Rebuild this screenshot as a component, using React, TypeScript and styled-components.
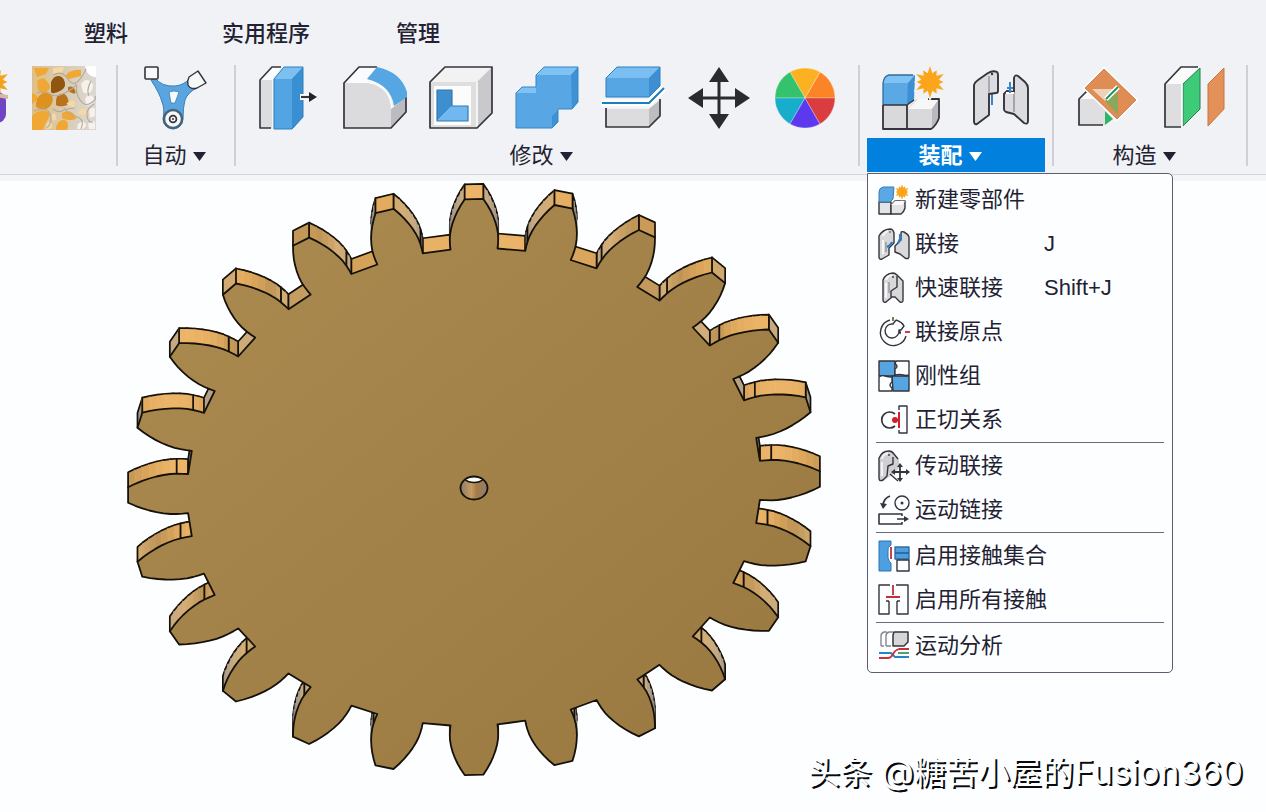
import React from 'react';
import styled, { createGlobalStyle } from 'styled-components';

const GlobalStyle = createGlobalStyle`
  *, *::before, *::after { box-sizing: border-box; }
  body {
    margin: 0;
    background: #fdfeff;
    color: #241f33;
    font-family: "Liberation Sans", "Noto Sans CJK SC", sans-serif;
    font-size: 22px;
    line-height: 32px;
  }
  button { font: inherit; color: inherit; border: 0; background: none; padding: 0; margin: 0; cursor: pointer; }
  ul { list-style: none; margin: 0; padding: 0; }
`;

const Page = styled.div`
  position: relative;
  display: flex;
  flex-direction: column;
  min-height: 100vh;
  overflow: hidden;
`;

const Toolbar = styled.header`
  background: #f0f2f5;
  border-bottom: 6px solid #f4f5f8;
  box-shadow: inset 0 -1px 0 #d3d6da;
`;

const Tabs = styled.nav`
  display: flex;
  height: 65px;
  padding: 2px 0 0 36px;
`;

const Tab = styled.button<{ $width: number }>`
  width: ${(p) => p.$width}px;
  text-align: center;
  font-weight: 500;
`;

const Panels = styled.div`
  display: flex;
  height: 110px;
`;

const Panel = styled.section<{ $width: number }>`
  position: relative;
  flex: none;
  display: flex;
  flex-direction: column;
  gap: 8px;
  width: ${(p) => p.$width}px;
  height: 107px;
  padding-top: 1px;
`;

const Divider = styled.div`
  flex: none;
  width: 2px;
  height: 101px;
  background: #cdd0d4;
`;

const Tools = styled.div<{ $end?: boolean }>`
  display: flex;
  justify-content: ${(p) => (p.$end ? 'flex-end' : 'center')};
  gap: 22px;
  overflow: hidden;
  padding: 0 ${(p) => (p.$end ? 20 : 0)}px;
`;

const Tool = styled.button`
  flex: none;
  width: 64px;
  height: 64px;
  svg { display: block; }
`;

const PanelLabel = styled.button<{ $active?: boolean; $trail?: boolean }>`
  display: flex;
  align-items: center;
  justify-content: center;
  gap: 6px;
  height: 34px;
  margin: 0 7px;
  padding: 2px ${(p) => (p.$trail ? 12 : 4)}px 0 0;
  font-weight: ${(p) => (p.$active ? 700 : 400)};
  color: ${(p) => (p.$active ? '#fff' : 'inherit')};
  background: ${(p) => (p.$active ? '#0280dd' : 'transparent')};
`;

const Menu = styled.ul`
  position: absolute;
  z-index: 2;
  top: 108px;
  left: 7px;
  width: 306px;
  padding: 4px 8px 4px 10px;
  background: #fdfeff;
  border: 1px solid #5d5c70;
  border-radius: 0 5px 5px 5px;
`;

const MenuSeparator = styled.li`
  height: 2px;
  margin-left: -2px;
  border-top: 1px solid #6b6a78;
`;

const MenuRow = styled.button`
  display: flex;
  align-items: center;
  gap: 5px;
  width: 100%;
  height: 44px;
  text-align: left;
  white-space: nowrap;
  svg { flex: none; display: block; }
`;

const MenuText = styled.span`
  min-width: 124px;
`;

const Shortcut = styled.kbd`
  font-family: "Liberation Sans", sans-serif;
  font-size: 22px;
`;

const Canvas = styled.main`
  flex: 1;
  padding-left: 120px;
  svg { display: block; }
`;

const Watermark = styled.p`
  position: absolute;
  right: 23px;
  bottom: 15px;
  margin: 0;
  font-family: Inter, "Noto Sans CJK SC", sans-serif;
  font-size: 32px;
  line-height: 48px;
  color: #fdfeff;
  text-shadow: 2px 2px 0 #0a0a0c;
  white-space: nowrap;
`;

const Latin = styled.span`
  font-size: 34px;
`;

/* ---------- gear model ---------- */

const CX = 354;
const CY = 306;
const RX = 346;
const RY = 288;
const SHEAR = 8;
const DEPTH = 15;
const TEETH = 24;

type Pt = { x: number; y: number; corner: boolean };

const flank: [number, number, boolean][] = [
  [0.829, 23.5, true],
  [0.845, 24, false],
  [0.862, 24.2, true],
  [0.88, 24, false],
  [0.9, 23, false],
  [0.92, 21.4, false],
  [0.94, 19.2, false],
  [0.96, 16.5, false],
  [0.98, 13.2, false],
  [1.0, 9.3, true],
];

function gearOutline(): Pt[] {
  const pts: Pt[] = [];
  for (let i = 0; i < TEETH; i++) {
    const a = (i / TEETH) * Math.PI * 2;
    const place = (r: number, hw: number, corner: boolean) => {
      const u = hw / 346;
      const h = Math.sqrt(r * r - u * u);
      const across = h * Math.sin(a) + u * Math.cos(a);
      const along = -h * Math.cos(a) + u * Math.sin(a);
      pts.push({
        x: CX + RX * across,
        y: CY + RY * along - SHEAR * across,
        corner,
      });
    };
    flank.forEach(([r, w, c]) => place(r, -w, c));
    [...flank].reverse().forEach(([r, w, c]) => place(r, w, c));
  }
  return pts;
}

function wallColor(ny: number): string {
  const up = Math.max(0, -ny);
  const stops: [number, number[]][] = [
    [0, [112, 106, 108]],
    [0.3, [160, 149, 136]],
    [0.55, [198, 170, 130]],
    [0.75, [212, 173, 116]],
    [0.88, [190, 148, 86]],
    [0.95, [218, 165, 90]],
    [1, [236, 180, 104]],
  ];
  for (let i = 1; i < stops.length; i++) {
    if (up <= stops[i][0]) {
      const [a, ca] = stops[i - 1];
      const [b, cb] = stops[i];
      const t = (up - a) / (b - a);
      return `rgb(${ca.map((v, k) => Math.round(v + (cb[k] - v) * t)).join(',')})`;
    }
  }
  return 'rgb(236,180,104)';
}

function Gear() {
  const pts = gearOutline();
  const n = pts.length;
  const walls = pts
    .map((p, i) => {
      const q = pts[(i + 1) % n];
      const dx = q.x - p.x;
      const dy = q.y - p.y;
      const len = Math.hypot(dx, dy) || 1;
      return { p, q, ny: -dx / len, i };
    })
    .filter((w) => w.ny < 0)
    .sort((a, b) => b.p.y + b.q.y - (a.p.y + a.q.y));
  const face = pts.map((p, i) => `${i ? 'L' : 'M'}${p.x.toFixed(1)} ${p.y.toFixed(1)}`).join('') + 'Z';
  return (
    <svg width="710" height="600" viewBox="0 0 710 600" role="img" aria-label="Gear">
      <defs>
        <linearGradient id="face" x1="0" y1="0" x2="1" y2="1">
          <stop offset="0" stopColor="#ab8b50" />
          <stop offset="1" stopColor="#997840" />
        </linearGradient>
        <linearGradient id="bore" x1="0" y1="0" x2="1" y2="0">
          <stop offset="0" stopColor="#8d7d66" />
          <stop offset=".4" stopColor="#c79b62" />
          <stop offset=".6" stopColor="#a67a48" />
          <stop offset="1" stopColor="#8c8070" />
        </linearGradient>
        <clipPath id="hole">
          <ellipse cx="354" cy="307" rx="13" ry="11" />
        </clipPath>
      </defs>
      <g strokeLinecap="round" strokeLinejoin="round">
        {walls.map(({ p, q, ny, i }) => {
          const c = wallColor(ny);
          return (
            <g key={i}>
              <path d={`M${p.x} ${p.y}L${q.x} ${q.y}v${-DEPTH}L${p.x} ${p.y - DEPTH}Z`} fill={c} stroke={c} strokeWidth=".8" />
              <path
                d={`M${p.x} ${p.y - DEPTH}L${q.x} ${q.y - DEPTH}${p.corner ? `M${p.x} ${p.y}v${-DEPTH}` : ''}${q.corner ? `M${q.x} ${q.y}v${-DEPTH}` : ''}`}
                fill="none"
                stroke="#14100a"
                strokeWidth="1.7"
              />
            </g>
          );
        })}
        <path d={face} fill="url(#face)" stroke="#14100a" strokeWidth="1.8" />
        <ellipse cx="354" cy="307" rx="13.5" ry="11.5" fill="url(#bore)" />
        <ellipse cx="354" cy="290" rx="13.5" ry="11.5" fill="#fdfeff" stroke="#14100a" strokeWidth="1.5" clipPath="url(#hole)" />
        <ellipse cx="354" cy="307" rx="13.5" ry="11.5" fill="none" stroke="#14100a" strokeWidth="1.8" />
      </g>
    </svg>
  );
}

/* ---------- toolbar icons, 64 × 64 ---------- */

const INK = '#35343c';

const Big = ({ children }: { children: React.ReactNode }) => (
  <svg width="64" height="64" viewBox="0 0 64 64" strokeLinejoin="round" aria-hidden="true">
    {children}
  </svg>
);

const starPath = (cx: number, cy: number, R: number, r: number, n: number) => {
  let d = '';
  for (let i = 0; i < n * 2; i++) {
    const a = (i * Math.PI) / n - Math.PI / 2;
    const rad = i % 2 ? r : i % 4 ? R * 0.84 : R;
    d += `${i ? 'L' : 'M'}${(cx + rad * Math.cos(a)).toFixed(2)} ${(cy + rad * Math.sin(a)).toFixed(2)}`;
  }
  return d + 'Z';
};

const FormIcon = () => (
  <Big>
    <rect x="20" y="26" width="40" height="31" rx="9" fill="#6f45c4" />
    <path d={starPath(48, 16, 16, 9, 12)} fill="#f5a21b" />
    <path d="M48 27l14 2v4l-14-2z" fill="#d9b7a6" />
  </Big>
);

const LatticeIcon = () => (
  <Big>
    <defs>
      <linearGradient id="lat" x1="0" y1="0" x2="1" y2="0">
        <stop offset="0" stopColor="#dfbf86" />
        <stop offset=".5" stopColor="#d9cbb0" />
        <stop offset="1" stopColor="#dbd9d6" />
      </linearGradient>
    </defs>
    <rect width="64" height="64" fill="url(#lat)" />
    <g fill="#f0a733">
      <path d="M2 2h15l-3 6-9 3zM5 15q6-5 9-1t4 6-4 6-8-3zM0 27q6 2 6 6l-6 5zM2 48q6-5 12-3t2 8-5 11H0V50z" />
      <path d="M37 6q7-3 12-2v6l-12 3-4-3zM24 61q2-7 7-7t5 5-2 5H24zM30 47q5-3 9-1t5 5-5 3-9-2z" />
    </g>
    <path d="M4 37q2-9 8-10t8 3-1 9-9 4-6-3z" fill="#dd9220" />
    <path d="M19 16q3-7 8-6t6 7-7 9-7-2z" fill="#90560f" />
    <path d="M24 35q0-6 5-7t7 5-4 7-8-1zM36 21q5-2 7 3t-3 3-4-4z" fill="#b9711a" />
    <g fill="#f4d9a2">
      <path d="M21 2l11-1-2 6-9 1zM15 57q4-3 5 1t-3 5h-3zM38 35q5-2 5 3t-5 2-3-3zM48 43q6-1 7 3t-5 3-4-3zM20 48q4-2 4 3t-4 3z" />
    </g>
    <g fill="#f6f1ec">
      <path d="M49 18q4-6 9-3t2 9-9 2zM53 33q3-6 7-3t1 7-7 2zM46 58q4-4 7-1t-2 6h-6zM57 44q4-4 6-1v7l-5 2zM56 58q4-4 7-2v7h-6z" />
      <path d="M53 0h11v11q-6 0-9-5z" fill="#fff" />
    </g>
    <g fill="none" stroke="#b4aa9a" strokeWidth="1.1">
      <path d="M21 9q9-5 14 3t10 4 9-13M5 27q8-3 13 1t15-1 11-9M45 19q-2 8 3 15t11 3 4-7M32 42q5 7 13 9t4 12M59 15q-5 9-2 15M62 38q-8 5-7 12t6 6M2 45q13-5 16 3t-3 14M21 43q6 4 9 2t13-3" />
    </g>
  </Big>
);

const AutoIcon = () => (
  <Big>
    <path
      d="M11 12q7 9 20 8 9-1 14-7l8 9q-9 4-12 12-2 7-2 19a10 10 0 0 1-20 0q2-10-1-17-2-8-11-22z"
      fill="#5aa5df"
      stroke="#3c7eb8"
      strokeWidth="1"
    />
    <path d="M25 26q5-2 10 0l-4 11h-4z" fill="#f6f9fb" stroke="#3c7eb8" strokeWidth=".8" />
    <rect x="1" y="1" width="13" height="12" rx="1" fill="#f7f8fa" stroke={INK} strokeWidth="1.6" />
    <path d="M45 11l9-6 8 12-9 5q-6 2-9-3-1-4 1-8z" fill="#f7f8fa" stroke={INK} strokeWidth="1.4" />
    <circle cx="29" cy="53" r="9" fill="#f7f8fa" stroke="#466379" strokeWidth="2.4" />
    <circle cx="29" cy="53" r="3.4" fill="none" stroke={INK} strokeWidth="1.8" />
    <circle cx="29" cy="53" r="1" fill={INK} />
  </Big>
);

const PressPullIcon = () => (
  <Big>
    <path d="M3 14L15 1h9l-8 13z" fill="#fafbfc" />
    <path d="M3 14h12v48H3z" fill="#dcdddf" />
    <path d="M14 62H3V14L15 1h9" fill="none" stroke={INK} strokeWidth="1.6" />
    <path d="M17 13L27 1h19v50L35 63H17z" fill="#52a4e2" />
    <path d="M17 13L27 1h19L35 13z" fill="#7cc0f2" />
    <path d="M35 13L46 1v50L35 63z" fill="#3a8fd2" />
    <path d="M17 13L27 1h19v50L35 63H17z" fill="none" stroke="#2e7fbd" strokeWidth="1" />
    <path d="M43 31h16" stroke="#fff" strokeWidth="6" />
    <path d="M44 31h9" stroke={INK} strokeWidth="2.2" />
    <path d="M52 26l8 5-8 5z" fill="#222127" />
  </Big>
);

const FilletIcon = () => (
  <Big>
    <path d="M1 17L16 1h18l-9 13q24 6 24 27l14-14v19L48 62H1z" fill="#fafbfc" />
    <path d="M1 17h24q22 4 23 26v19H1z" fill="#dbdbdd" />
    <path d="M48 43l15-12v15L48 62z" fill="#bcbcc0" />
    <path d="M34 1H16L1 17v45h47l15-16V31" fill="none" stroke={INK} strokeWidth="1.7" />
    <path d="M24 13L34 1q24 5 30 25v5L51 40Q48 19 24 13z" fill="#56a6e3" />
  </Big>
);

const ShellIcon = () => (
  <Big>
    <path d="M1 16L16 1h47v46L48 62H1z" fill="#f2f2f3" />
    <path d="M48 16L63 1v46L48 62z" fill="#c9c9cc" />
    <path d="M1 16h47v46H1z" fill="#dededf" />
    <path d="M48 16v46" stroke="#f4f4f4" strokeWidth="2" />
    <path d="M5 20h37v39H5z" fill="#fcfcfd" />
    <path d="M8 24h15v16L8 55z" fill="#3d8fd0" />
    <path d="M23 40h16v15H8z" fill="#70b8ef" />
    <path d="M8 24h15v16h16v15H8z" fill="none" stroke="#3279ad" strokeWidth="1.2" />
    <path d="M1 16L16 1h47v46L48 62H1z" fill="none" stroke={INK} strokeWidth="1.7" />
  </Big>
);

const CombineIcon = () => (
  <Big>
    <path d="M1 27l6-6h14V9l8-8h34v35l-6 7H43v13l-6 6H1z" fill="#58a7e4" />
    <path d="M1 27l6-6h14v6zM21 9l8-8h34l-7 8z" fill="#7fc2f4" />
    <path d="M56 9l7-8v35l-6 7zM37 50l6-6v12l-6 6z" fill="#3e91d3" />
    <path d="M1 27l6-6h14V9l8-8h34v35l-6 7H43v13l-6 6H1z" fill="none" stroke="#3385c4" strokeWidth="1" />
  </Big>
);

const SplitIcon = () => (
  <Big>
    <path d="M5 12L16 1h43v19L48 31H5z" fill="#56a6e3" />
    <path d="M5 12L16 1h43L48 12z" fill="#7bbff2" />
    <path d="M48 12L59 1v19L48 31z" fill="#3d8fd1" />
    <path d="M5 12L16 1h43v19L48 31H5z" fill="none" stroke="#2f7fbe" />
    <path d="M5 43h43v18H5z" fill="#dcdcde" />
    <path d="M48 43l11-9v16L48 61z" fill="#bdbdc0" />
    <path d="M5 42v19h43l11-11V33" fill="none" stroke={INK} strokeWidth="1.7" />
    <path d="M1 37h47l15-15" fill="none" stroke="#fdfeff" strokeWidth="7" />
    <path d="M1 37h47l15-15" fill="none" stroke="#1d7db8" strokeWidth="2" />
  </Big>
);

const MoveIcon = () => (
  <Big>
    <path d="M32 10v44M10 32h44" stroke="#2b2b2e" strokeWidth="3" />
    <path d="M32 1l10 15H22zM32 63l10-15H22zM1 32l15-10v20zM63 32L48 22v20z" fill="#2b2b2e" />
  </Big>
);

const wheel = ['#fb8427', '#fcb123', '#35c26d', '#18adcb', '#5c39ef', '#d93d3f'];

const AppearanceIcon = () => (
  <Big>
    {wheel.map((c, i) => {
      const p = (k: number) => {
        const a = (-k * Math.PI) / 3;
        return `${(32 + 30 * Math.cos(a)).toFixed(2)} ${(32 + 30 * Math.sin(a)).toFixed(2)}`;
      };
      return <path key={c} d={`M32 32L${p(i)}A30 30 0 0 0 ${p(i + 1)}Z`} fill={c} stroke="#fff" strokeOpacity=".35" strokeWidth=".8" />;
    })}
  </Big>
);

const NewComponentIcon = () => (
  <Big>
    <path d="M2 39h24v24H2z" fill="#d9d9dc" />
    <path d="M26 43l9-10h23v19l-8 11H26z" fill="#d9d9dc" />
    <path d="M27 43l10-10h21l-7 10z" fill="#f7f7f8" />
    <path d="M51 43l7-10v19l-7 11z" fill="#b9b9bd" />
    <path d="M26 39v24M2 39v24h48q5-3 8-11V33H47" fill="none" stroke={INK} strokeWidth="1.8" />
    <path d="M2 17q1-7 6-8h26l-2 26-6 4H2z" fill="#5aa8e4" />
    <path d="M2 17q1-7 6-8h26l-6 8z" fill="#80c2f3" />
    <path d="M27 17l7-8-1 25-7 5z" fill="#3d8fd1" />
    <path d="M32 9H8q-5 1-6 8v22" fill="none" stroke="#2d6e9f" strokeWidth="1.3" />
    <path d="M2 39h24l7-5" fill="none" stroke={INK} strokeWidth="1.4" />
    <path d={starPath(49, 16, 19, 13, 12)} fill="#f0f2f5" />
    <path d={starPath(49, 16, 16, 9, 12)} fill="#fba51a" />
  </Big>
);

const JointIcon = () => (
  <Big>
    <path d="M25 27v12" stroke="#3787cd" strokeWidth="2" />
    <path d="M7 19q1-3 4-5L21 7q5-3 9-1 1 1 1 3v16q0 2-2 2l-7 1v21L10 58q-3 1-3-3z" fill="#dcdce0" stroke={INK} strokeWidth="1.9" />
    <path d="M22 10v17" stroke="#aaaab0" strokeWidth="2" />
    <circle cx="25" cy="8" r="1.2" fill={INK} />
    <path d="M37 28l3-3 7 1V12q1-4 4-2l7 6q3 3 3 6v33q0 4-4 2L47 48l-8-2q-2-1-2-3z" fill="#dcdce0" stroke={INK} strokeWidth="1.9" />
    <path d="M47 26v20" stroke="#96969c" strokeWidth="1.6" />
    <path d="M39 27h8" stroke="#fff" strokeWidth="2" />
    <path d="M43 16v11M40 22h6" stroke="#3787cd" strokeWidth="2" />
  </Big>
);

const PlaneAngleIcon = () => (
  <Big>
    <path d="M4 33l12-12 14 22v16H4z" fill="#dfdfe2" />
    <path d="M4 33l12-12 5 12z" fill="#fafafa" />
    <path d="M16 21L4 33v26h24" fill="none" stroke={INK} strokeWidth="1.7" />
    <path d="M30 45l8 8-8 6z" fill="#2fb468" />
    <path d="M29 2l33 32-20 20L9 22z" fill="#e18c56" stroke="#fff" strokeWidth="2.4" />
    <path d="M29 3l32 31-19 19L10 22z" fill="#e08c55" stroke="#c8753f" strokeWidth=".8" />
    <path d="M17 23h26L30 35z" fill="#ecd2b9" />
    <path d="M30 35l13-9v23z" fill="#8ba85a" />
    <path d="M31 33l12-12" stroke="#fff" strokeWidth="5" />
    <path d="M31 33l12-12" stroke="#1e8f57" strokeWidth="1.8" />
  </Big>
);

const OffsetPlaneIcon = () => (
  <Big>
    <path d="M4 18L20 1h18L20 18z" fill="#fbfbfc" />
    <path d="M4 18h16v43H4z" fill="#dedee1" />
    <path d="M20 61H4V18L20 1h17" fill="none" stroke={INK} strokeWidth="1.7" />
    <path d="M22 18L39 2v41L22 60z" fill="#3ecb78" stroke="#2b7b50" strokeWidth="1" />
    <path d="M21 61V18" stroke="#fff" strokeWidth="1.4" />
    <path d="M47 18L63 2v41L47 60z" fill="#e39158" stroke="#c9753f" strokeWidth="1" />
  </Big>
);

/* ---------- menu icons, 32 × 32 ---------- */

const Small = ({ children }: { children: React.ReactNode }) => (
  <svg width="32" height="32" viewBox="0 0 32 32" fill="none" stroke={INK} strokeWidth="1.4" strokeLinejoin="round" aria-hidden="true">
    {children}
  </svg>
);

const MenuComponent = () => (
  <Small>
    <path d="M1 18h12v12H1z" fill="#e4e4e6" />
    <path d="M13 21l4-4h10v7q-1 4-4 6H13z" fill="#e4e4e6" />
    <path d="M13 21l4-4h10l-3 4z" fill="#fafafa" stroke="none" />
    <path d="M1 8q0-4 4-5h11l-1 12-3 3H1z" fill="#5aa8e4" stroke="#3b7cae" strokeWidth="1" />
    <path d={starPath(24, 8, 9, 6, 12)} fill="#fdfeff" stroke="none" />
    <path d={starPath(24, 8, 7.5, 4.6, 12)} fill="#fba51a" stroke="none" />
  </Small>
);

const MenuJoint = () => (
  <Small>
    <path d="M1 8Q4 2 12 1q3 0 4 4v10l-5 5v7l-7 4q-3 1-3-2z" fill="#d8d8db" />
    <path d="M5 8q1-4 5-5M5 12v14" stroke="#f7f7f7" strokeWidth="2" />
    <path d="M8 14v10" stroke="#a8a8ae" strokeWidth="2" />
    <circle cx="12" cy="4" r=".8" fill={INK} stroke="none" />
    <path d="M17 18l6-6V5q0-2 3-1 4 2 5 5v19q0 4-4 2l-5-4-5-2z" fill="#dadadd" />
    <path d="M9 19q4-2 5-5M20 15l3-6M22 6v7" stroke="#2f7cc0" strokeWidth="2.2" />
  </Small>
);

const MenuQuickJoint = () => (
  <Small>
    <path d="M5 8q2-6 10-7 2 0 4 2l6 6v19q0 3-3 2l-5-5h-3l-6 5q-3 1-3-2z" fill="#d8d8db" />
    <path d="M8 8q1-4 6-5M8 11v15" stroke="#f7f7f7" strokeWidth="2" />
    <path d="M19 4v11l-6 4v6" />
    <path d="M11 10v11" stroke="#a8a8ae" strokeWidth="2" />
    <circle cx="15" cy="5" r=".9" fill={INK} stroke="none" />
  </Small>
);

const MenuOrigin = () => (
  <Small>
    <path d="M12 4A13 13 0 1 0 28 20M18 4q6 2 8 6l-3 4h-2a7 7 0 1 1-6-6l3-4M21 14q2 2 1 4" />
    <path d="M15 1v4" stroke="#557a45" strokeWidth="1.8" />
    <path d="M27 16h5" stroke="#d3222e" strokeWidth="1.8" />
  </Small>
);

const MenuRigid = () => (
  <Small>
    <path d="M1 1h16v15H1z" fill="#55a5e2" />
    <path d="M17 16h14v15H15l-1-15z" fill="#55a5e2" />
    <path d="M18 1h13v14q-3 1-6 0t-8 0V9q4-3 0-5z" fill="#fdfeff" />
    <path d="M1 17q3-2 6-1t7 1v5q-4 3 0 6v3H1z" fill="#fdfeff" />
  </Small>
);

const MenuTangent = () => (
  <Small>
    <path d="M17 10a8 8 0 1 0 0 12" strokeWidth="1.7" />
    <path d="M21 4V2h8v27h-8v-3M21 4v2" />
    <path d="M21 8v16" stroke="#d11f2b" strokeWidth="2" />
    <path d="M16 16h5" stroke="#d11f2b" strokeWidth="2" />
    <circle cx="17" cy="16" r="3" fill="#d11f2b" stroke="none" />
  </Small>
);

const MenuDrive = () => (
  <Small>
    <path d="M1 8Q4 1 11 1q3 0 5 3l5 5v9l-7 7-9 6q-4 1-4-3z" fill="#d0d0d4" stroke="none" />
    <path d="M20 9l-4-5q-2-3-5-3Q4 1 1 8v20q0 4 4 2l4-4 1-10 5-2V7M12 24l8 7" />
    <path d="M4 9q1-5 6-6M4 12v14" stroke="#f2f2f2" strokeWidth="2" />
    <circle cx="11" cy="5" r=".9" fill={INK} stroke="none" />
    <path d="M22 15v15M15 22h15" strokeWidth="1.8" />
    <path d="M22 13l3 4h-6zM22 32l3-4h-6zM13 22l4-3v6zM32 22l-4-3v6z" fill={INK} stroke="none" />
  </Small>
);

const MenuLink = () => (
  <Small>
    <path d="M12 2Q6 4 5 11" strokeWidth="1.8" />
    <path d="M2 9l3 6 4-5z" fill={INK} stroke="none" />
    <circle cx="24" cy="9" r="7" />
    <circle cx="24" cy="9" r="1.5" fill={INK} stroke="none" />
    <path d="M24 22v-2H1v10h23v-2M19 25h9" strokeWidth="1.6" />
    <path d="M26 22l5 3-5 3z" fill={INK} stroke="none" />
  </Small>
);

const MenuContactSet = () => (
  <Small>
    <path d="M1 1h12v4q-4 2-3 6v7q1 4 3 5v8H1z" fill="#4d9fdf" stroke="#2c77b3" strokeWidth="1" />
    <path d="M13 7v12" stroke="#bf303b" strokeWidth="1.8" />
    <path d="M17 7h14v12H17z" fill="#4d9fdf" stroke="#2c6fa5" />
    <path d="M17 13h14" stroke="#24587f" />
    <path d="M19 20h12v11H19z" fill="#fdfeff" />
  </Small>
);

const MenuContactAll = () => (
  <Small>
    <path d="M12 1H1v29h10V17M18 1h12v29H19V17M8 17h3M19 17h3" />
    <path d="M15 1v10M8 13h14" stroke="#c3303a" strokeWidth="1.8" />
  </Small>
);

const MenuStudy = () => (
  <Small>
    <path d="M16 2h14v10l-4 4H15V5z" fill="#d6d6d9" strokeWidth="1.5" />
    <path d="M8 16V6q0-3 3-4h4M8 16h5M3 16V6q0-3 3-4h3M3 16h3" stroke="#88878f" />
    <path d="M1 23h12l4 4h14" stroke="#2784c8" strokeWidth="1.8" />
    <path d="M20 23h11" stroke="#39976b" strokeWidth="1.8" />
    <path d="M1 28h9q3 0 5-4t6-5h10" stroke="#cc2f38" strokeWidth="1.8" />
  </Small>
);

const Caret = () => (
  <svg width="13" height="9" viewBox="0 0 13 9" aria-hidden="true">
    <path d="M0 0h13L6.5 9z" fill="currentColor" />
  </svg>
);

type Item = { icon: React.FC; text: string; keys?: string };

const groups: Item[][] = [
  [
    { icon: MenuComponent, text: '新建零部件' },
    { icon: MenuJoint, text: '联接', keys: 'J' },
    { icon: MenuQuickJoint, text: '快速联接', keys: 'Shift+J' },
    { icon: MenuOrigin, text: '联接原点' },
    { icon: MenuRigid, text: '刚性组' },
    { icon: MenuTangent, text: '正切关系' },
  ],
  [
    { icon: MenuDrive, text: '传动联接' },
    { icon: MenuLink, text: '运动链接' },
  ],
  [
    { icon: MenuContactSet, text: '启用接触集合' },
    { icon: MenuContactAll, text: '启用所有接触' },
  ],
  [{ icon: MenuStudy, text: '运动分析' }],
];

type PanelSpec = {
  id: string;
  width: number;
  label?: string;
  end?: boolean;
  trail?: boolean;
  active?: boolean;
  tools: [string, React.FC][];
};

const panels: PanelSpec[] = [
  { id: 'create', width: 116, end: true, tools: [['Form', FormIcon], ['Lattice', LatticeIcon]] },
  { id: 'auto', width: 116, label: '自动', tools: [['Automated modeling', AutoIcon]] },
  {
    id: 'modify',
    width: 622,
    label: '修改',
    trail: true,
    tools: [
      ['Press pull', PressPullIcon],
      ['Fillet', FilletIcon],
      ['Shell', ShellIcon],
      ['Combine', CombineIcon],
      ['Split body', SplitIcon],
      ['Move', MoveIcon],
      ['Appearance', AppearanceIcon],
    ],
  },
  { id: 'assemble', width: 192, label: '装配', trail: true, active: true, tools: [['New component', NewComponentIcon], ['Joint', JointIcon]] },
  { id: 'construct', width: 192, label: '构造', trail: true, tools: [['Plane at angle', PlaneAngleIcon], ['Offset plane', OffsetPlaneIcon]] },
];

const AssembleMenu = () => (
  <Menu>
    {groups.map((items, g) => (
      <React.Fragment key={g}>
        {g > 0 && <MenuSeparator role="separator" />}
        {items.map(({ icon: Icon, text, keys }) => (
          <li key={text}>
            <MenuRow type="button">
              <Icon />
              <MenuText>{text}</MenuText>
              {keys && <Shortcut>{keys}</Shortcut>}
            </MenuRow>
          </li>
        ))}
      </React.Fragment>
    ))}
  </Menu>
);

export default function App() {
  return (
    <Page>
      <GlobalStyle />
      <Toolbar>
        <Tabs>
          <Tab $width={140}>塑料</Tab>
          <Tab $width={180}>实用程序</Tab>
          <Tab $width={124}>管理</Tab>
        </Tabs>
        <Panels>
          {panels.map((p) => (
            <React.Fragment key={p.id}>
              <Panel $width={p.width}>
                <Tools $end={p.end}>
                  {p.tools.map(([name, Icon]) => (
                    <Tool key={name} type="button" aria-label={name}>
                      <Icon />
                    </Tool>
                  ))}
                </Tools>
                {p.label && (
                  <PanelLabel type="button" $active={p.active} $trail={p.trail} aria-expanded={!!p.active}>
                    {p.label}
                    <Caret />
                  </PanelLabel>
                )}
                {p.active && <AssembleMenu />}
              </Panel>
              <Divider />
            </React.Fragment>
          ))}
        </Panels>
      </Toolbar>
      <Canvas>
        <Gear />
      </Canvas>
      <Watermark>
        头条 <Latin>@</Latin>糖苦小屋的<Latin>Fusion360</Latin>
      </Watermark>
    </Page>
  );
}
